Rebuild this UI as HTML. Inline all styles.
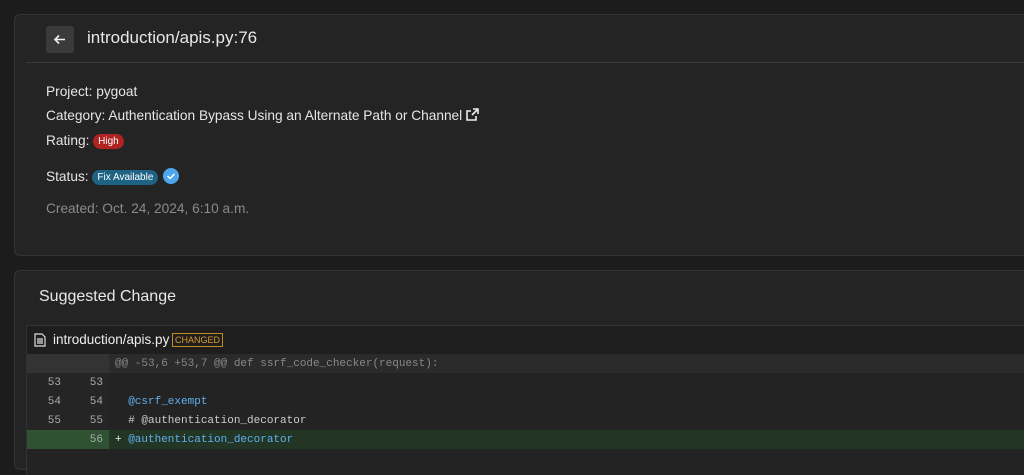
<!DOCTYPE html>
<html><head><style>
*{margin:0;padding:0;box-sizing:border-box}
body{width:1024px;height:454px;overflow:hidden;background:#1c1c1c;font-family:"Liberation Sans",sans-serif;color:#e6e6e6;position:relative}
.card{position:absolute;left:14px;width:1030px;background:#242424;border:1px solid #343434;border-radius:6px}
.c1{top:14px;height:242px}
.c2{top:270px;height:200px}
.back{position:absolute;left:31px;top:11px;width:28px;height:27px;background:#3a3a3a;border-radius:3px}
.title{position:absolute;left:72px;top:13px;font-size:17px;color:#e8e8e8}
.hr{position:absolute;left:11px;right:0;top:47px;height:1px;background:#3a3a3a}
.row{position:absolute;left:31px;font-size:13.7px;color:#e6e6e6}
.badge{display:inline-block;font-size:10px;padding:2px 5px;border-radius:9px;color:#fff;vertical-align:1px}
.mono{font-family:"Liberation Mono","DejaVu Sans Mono",monospace;font-size:11px}
.code{position:absolute;left:11px;top:54px;width:1010px;height:150px;background:#232323;border:1px solid #333;border-bottom:none}
.fh{height:28px;background:#1e1e1e;position:relative}
.ln{position:absolute;left:0;width:1010px;height:19px}
.g{position:absolute;left:0;width:82px;height:100%;background:#252525}
.n{position:absolute;top:4px;color:#aaa;text-align:right;width:20px}
.t{position:absolute;left:88px;top:4px;white-space:pre}
</style></head><body>
<div class="card c1">
 <div class="back"><svg width="28" height="27" viewBox="0 0 28 27"><path d="M19 13.5H9M13 9.5l-4 4 4 4" stroke="#eee" stroke-width="1.6" fill="none"/></svg></div>
 <div class="title">introduction/apis.py:76</div>
 <div class="hr"></div>
 <div class="row" style="top:69px">Project: pygoat</div>
 <div class="row" style="top:93px">Category: Authentication Bypass Using an Alternate Path or Channel <svg width="13" height="13" viewBox="0 0 13 13" style="vertical-align:-1px"><path d="M7 1h5v5M12 1L6 7M10 8v4H1V3h4" stroke="#eee" stroke-width="1.6" fill="none"/></svg></div>
 <div class="row" style="top:118px">Rating: <span class="badge" style="background:#b02323">High</span></div>
 <div class="row" style="top:152px">Status: <span class="badge" style="background:#1e6384">Fix Available</span> <svg width="18" height="18" viewBox="0 0 18 18" style="vertical-align:-4px"><circle cx="9" cy="9" r="8" fill="#4ea6ee"/><path d="M5.5 9l2.5 2.5 4.5-4.5" stroke="#fff" stroke-width="1.5" fill="none"/></svg></div>
 <div class="row" style="top:186px;color:#8a8a8a">Created: Oct. 24, 2024, 6:10 a.m.</div>
</div>
<div class="card c2">
 <div style="position:absolute;left:24px;top:17px;font-size:16px;color:#e8e8e8">Suggested Change</div>
 <div class="code">
  <div class="fh"><svg width="12" height="14" viewBox="0 0 12 14" style="position:absolute;left:7px;top:7px"><path d="M1 1h7l3 3v9H1z M3 6h6M3 8h6M3 10h6" stroke="#ddd" stroke-width="1.2" fill="none"/></svg>
   <span style="position:absolute;left:26px;top:6px;font-size:13.5px;color:#eee">introduction/apis.py</span>
   <span style="position:absolute;left:145px;top:7px;font-size:9px;color:#d89a2a;border:1px solid #c08a20;padding:1px 2px">CHANGED</span></div>
  <div class="ln" style="top:28px;height:19px;background:#2b2b2b"><div class="g" style="background:#333"></div><div class="t mono" style="color:#888">@@ -53,6 +53,7 @@ def ssrf_code_checker(request):</div></div>
  <div class="ln" style="top:47px"><div class="g"></div><span class="n mono" style="left:14px">53</span><span class="n mono" style="left:56px">53</span></div>
  <div class="ln" style="top:66px"><div class="g"></div><span class="n mono" style="left:14px">54</span><span class="n mono" style="left:56px">54</span><div class="t mono" style="color:#5fb0ee">  @csrf_exempt</div></div>
  <div class="ln" style="top:85px"><div class="g"></div><span class="n mono" style="left:14px">55</span><span class="n mono" style="left:56px">55</span><div class="t mono" style="color:#ccc">  # @authentication_decorator</div></div>
  <div class="ln" style="top:104px;background:#233524"><div class="g" style="background:#2f5233"></div><span class="n mono" style="left:56px">56</span><div class="t mono"><span style="color:#eee">+ </span><span style="color:#5fb0ee">@authentication_decorator</span></div></div>
 </div>
</div>
</body></html>
